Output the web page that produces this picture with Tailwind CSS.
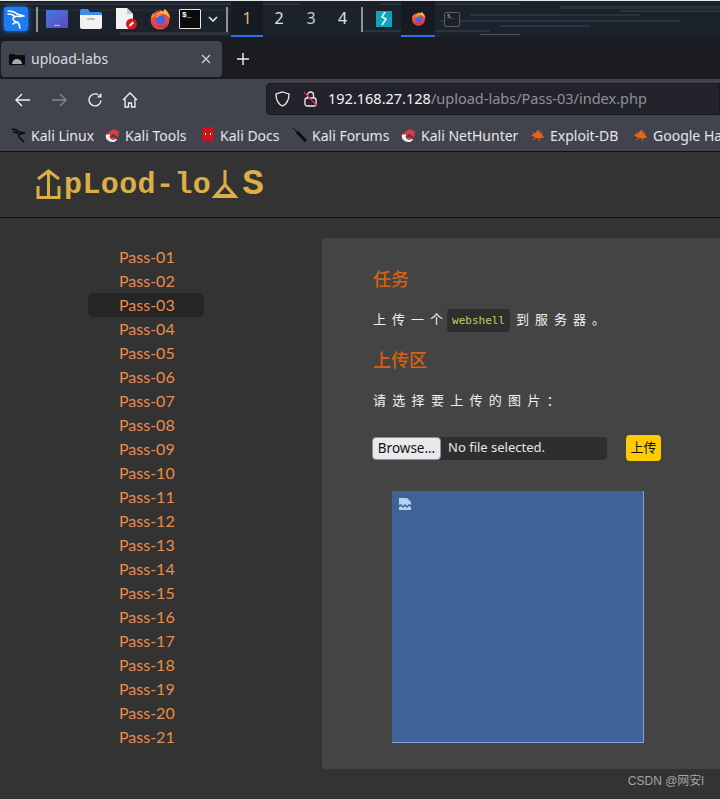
<!DOCTYPE html>
<html lang="zh">
<head>
  <meta charset="UTF-8">
  <title>upload-labs</title>
  <script src="https://cdn.jsdelivr.net/npm/@tailwindcss/browser@4"></script>
</head>
<body class="w-[720px] h-[799px] overflow-hidden bg-[#333333] font-['Noto_Sans','Noto_Sans_CJK_SC',sans-serif]">
  <svg class="hidden">
    <defs>
      <symbol id="firefox" viewBox="0 0 22 22">
        <circle cx="11" cy="12" r="9.5" fill="#f0483e"/>
        <path d="M3 5c1 2 2 2 3 3 2-3 5-3 6-6 1 1 1 2 2 2 1-1 1-3 1-3 4 2 6 6 6 10-1-2-2-3-4-4-3-2-6-1-8 0-2 0-5 0-6-2z" fill="#ffb53d"/>
        <path d="M2 10c0-2 1-3 2-4l1 3z" fill="#ff8a2b"/>
        <circle cx="11.500" cy="12" r="5" fill="#4a63d8"/>
        <path d="M6 9c2-2 6-3 9-1-3-1-6 0-7 2z" fill="#ff9a2e"/>
        <path d="M2 13c2 5 8 8 13 6 2-1 4-3 5-6-2 3-5 5-9 5-4 0-7-2-9-5z" fill="#e0283f"/>
      </symbol>
      <symbol id="kalitools" viewBox="0 0 16 16">
        <path d="M1 7 9 1l6 3-1 6-5-4-4 3z" fill="#e0393e"/>
        <path d="M1 7c-1 5 3 8 7 8 2 0 4-1 5-3l-4-2c-1 1-2 1-3 0l-1-3z" fill="#f2f2f2"/>
        <path d="M5 9l3 3 4-1" fill="none" stroke="#c9262b" stroke-width="1.500"/>
      </symbol>
      <symbol id="bug" viewBox="0 0 16 16">
        <path d="M1 8 6 5l2-3 2 2 3 3 2 3-4 1H7z" fill="#e8641b"/>
        <path d="M3 4l3 3M10 2l-1 4M13 5l-3 2M3 13l4-3M10 14l0-4" stroke="#e8641b" stroke-width="1"/>
      </symbol>
    </defs>
  </svg>

  <!-- panel -->
  <div class="relative h-[37px] bg-[#1b222c] border-t border-[#e6e6e6] overflow-hidden">
    <svg class="absolute inset-0" width="720" height="36" viewBox="0 0 720 36">
      <g fill="#2a323e">
        <rect x="0" y="2" width="300" height="2"/><rect x="380" y="2" width="140" height="2"/><rect x="560" y="5" width="160" height="3"/>
        <rect x="470" y="13" width="170" height="2"/><rect x="440" y="19" width="240" height="2"/><rect x="500" y="24" width="90" height="2"/>
        <rect x="360" y="29" width="130" height="2"/><rect x="480" y="33" width="40" height="1" fill="#4a4f5a"/><rect x="620" y="9" width="100" height="2"/>
        <rect x="120" y="31" width="110" height="3"/><rect x="30" y="8" width="200" height="2" fill="#232a35"/>
      </g>
    </svg>
    <div class="relative flex items-center h-[36px]">
      <div class="w-[24px] h-[24px] ml-[4px] rounded-[3px] bg-[#1f7cf0] shadow-[0_0_5px_#2a7fff] flex items-center justify-center">
        <svg width="22" height="22" viewBox="0 0 22 22" fill="none" stroke="#fff" stroke-width="1.600" stroke-linecap="round" stroke-linejoin="round"><path d="M3 3c4 0 7 1 9 3l7 2-5 .5c-3-.5-6 0-6 2.500s4 2.500 6 5l1 4M3 6c3 0 5 .5 6 2M13 14c-2 0-4 1-5 2"/></svg>
      </div>
      <div class="w-[2px] h-[25px] ml-[8px] bg-[#8f9296]"></div>
      <div class="w-[22px] h-[18px] ml-[8px] rounded-[1px] bg-gradient-to-br from-[#4178e0] to-[#5a4bbd] flex items-end justify-center text-white text-[7px] leading-[9px] font-bold">...</div>
      <svg class="ml-[12px]" width="22" height="20" viewBox="0 0 22 20"><path d="M0 2a2 2 0 0 1 2-2h6l2 3h10a2 2 0 0 1 2 2v4H0z" fill="#3d8bea"/><path d="M0 6h22v12a2 2 0 0 1-2 2H2a2 2 0 0 1-2-2z" fill="#f1f1ef"/><rect x="7" y="9" width="8" height="2" rx="1" fill="#b9b9b9"/></svg>
      <svg class="ml-[14px]" width="22" height="22" viewBox="0 0 22 22"><path d="M0 0h11l6 6v15H0z" fill="#f2f2f2"/><path d="M11 0l6 6h-6z" fill="#c9c9c9"/><circle cx="15.500" cy="16" r="5.500" fill="#d5171f"/><path d="M13 18.500l.5-2 3-3 1.500 1.500-3 3z" fill="#fff"/></svg>
      <svg class="ml-[11px]" width="22" height="22"><use href="#firefox"/></svg>
      <div class="w-[22px] h-[20px] ml-[8px] bg-[#0b0b0b] border border-[#e6e6e6] rounded-[1px] text-white text-[8px] leading-[10px] pl-[2px] font-['Liberation_Mono',monospace] font-bold">$_</div>
      <svg class="ml-[7px]" width="10" height="6" viewBox="0 0 10 6" fill="none" stroke="#e5e5e5" stroke-width="1.600"><path d="M1 1l4 4 4-4"/></svg>
      <div class="w-[2px] h-[25px] ml-[8px] bg-[#8f9296]"></div>
      <div class="ml-[3px] flex text-[16px] text-[#dfe3e8] text-center leading-[34px]">
        <div class="w-[32px] h-[36px] bg-[#161b23] border-b-2 border-[#2e6fe6] text-[#e0b48a]">1</div>
        <div class="w-[32px] h-[36px]">2</div>
        <div class="w-[32px] h-[36px] text-[#c4ccd6]">3</div>
        <div class="w-[31px] h-[36px]">4</div>
      </div>
      <div class="w-[2px] h-[25px] ml-[3px] bg-[#8f9296]"></div>
      <div class="w-[16px] h-[16px] ml-[13px] bg-[#0fa3ba] flex items-center justify-center">
        <svg width="10" height="14" viewBox="0 0 10 14" fill="none" stroke="#e8f7fa" stroke-width="1.600"><path d="M6 0 3 5l4 2-4 6"/></svg>
      </div>
      <div class="w-[34px] h-[36px] ml-[9px] bg-[#161b23] border-b-2 border-[#2e6fe6] flex items-center justify-center">
        <svg width="15" height="15"><use href="#firefox"/></svg>
      </div>
      <div class="w-[16px] h-[15px] ml-[9px] border border-[#5b5f66] rounded-[2px] bg-[#1c2027] text-[#a9adb3] text-[6px] leading-[8px] pl-[2px] font-['Liberation_Mono',monospace]">$_</div>
    </div>
  </div>

  <!-- tab strip -->
  <div class="h-[42px] bg-[#1b1c21] flex items-center pt-[1px]">
    <div class="ml-[1px] w-[221px] h-[36px] bg-[#42444d] rounded-[4px] flex items-center text-[#d5dce6]">
      <svg class="ml-[8px]" width="16" height="12" viewBox="0 0 16 12"><path d="M0 2a1 1 0 0 1 1-1h4l1 1h9a1 1 0 0 1 1 1v8a1 1 0 0 1-1 1H1a1 1 0 0 1-1-1z" fill="#0d0d0d"/><path d="M3 11a5 5 0 0 1 10 0z" fill="#a9a9a9"/></svg>
      <span class="ml-[6px] text-[14px]">upload-labs</span>
      <svg class="ml-auto mr-[11px]" width="10" height="10" viewBox="0 0 10 10" stroke="#cfd3da" stroke-width="1.200"><path d="M1 1l8 8M9 1l-8 8"/></svg>
    </div>
    <svg class="ml-[15px]" width="12" height="12" viewBox="0 0 12 12" stroke="#f0f0f0" stroke-width="1.400"><path d="M6 0v12M0 6h12"/></svg>
  </div>

  <!-- toolbar -->
  <div class="h-[42px] bg-[#42444d] flex items-center">
    <svg class="ml-[15px]" width="16" height="14" viewBox="0 0 16 14" fill="none" stroke="#f0f0f2" stroke-width="1.400"><path d="M15 7H1M7 1 1 7l6 6"/></svg>
    <svg class="ml-[20px]" width="16" height="14" viewBox="0 0 16 14" fill="none" stroke="#85868c" stroke-width="1.400"><path d="M1 7h14M9 1l6 6-6 6"/></svg>
    <svg class="ml-[20px]" width="16" height="16" viewBox="0 0 16 16" fill="none" stroke="#f0f0f2" stroke-width="1.400"><path d="M14 8.500A6 6 0 1 1 11.500 3"/><path d="M14.500 1v4.500H10z" fill="#f0f0f2" stroke="none"/></svg>
    <svg class="ml-[19px]" width="16" height="16" viewBox="0 0 16 16" fill="none" stroke="#f0f0f2" stroke-width="1.300"><path d="M1 8 8 1l7 7M3 6.500V15h3.500v-4h3v4H13V6.500"/></svg>
    <div class="ml-[128px] flex-1 h-[32px] -mt-[3px] bg-[#23232c] border border-[#17171c] rounded-l-[4px] flex items-center">
      <svg class="ml-[8px] shrink-0" width="15" height="16" viewBox="0 0 15 16" fill="none" stroke="#f0f0f2" stroke-width="1.300"><path d="M7.500 1 14 3c0 6-2 10-6.500 12C3 13 1 9 1 3z"/></svg>
      <svg class="ml-[13px] shrink-0" width="15" height="16" viewBox="0 0 15 16" fill="none" stroke="#f0f0f2" stroke-width="1.300"><rect x="2" y="7" width="11" height="8" rx="2"/><path d="M4.500 7V4a3 3 0 0 1 6 0v3"/><path d="M1 1l13 14" stroke="#e0294a"/></svg>
      <span class="ml-[10px] text-[14.500px] text-[#f4f4f5]">192.168.27.128<span class="text-[#8f9096]">/upload-labs/Pass-03/index.php</span></span>
    </div>
  </div>

  <!-- bookmarks -->
  <div class="h-[30px] bg-[#42444d] flex items-center text-[14px] text-[#e4e6ea] whitespace-nowrap overflow-hidden pb-[2px]">
    <div class="w-[94px] ml-[11px] shrink-0 flex items-center gap-[4px]">
      <svg class="shrink-0" width="16" height="16" viewBox="0 0 16 16" fill="none" stroke="#0c0c0c" stroke-width="1.500"><path d="M1 2c3 0 5 1 7 3l6 1-4 1c-2 0-3 1-2 3l5 5M2 5c2 0 4 0 5 2"/></svg>
      <span>Kali Linux</span>
    </div>
    <div class="w-[97px] shrink-0 flex items-center gap-[5px]">
      <svg class="shrink-0" width="15" height="15"><use href="#kalitools"/></svg>
      <span>Kali Tools</span>
    </div>
    <div class="w-[90px] shrink-0 flex items-center gap-[6px]">
      <svg class="shrink-0" width="12" height="16" viewBox="0 0 12 16"><path d="M0 1a1 1 0 0 1 1-1h11v14H2v2H1a1 1 0 0 1-1-1z" fill="#c4161c"/><path d="M0 14h2v2H0z" fill="#2a4d9a"/><path d="M4 6 3 7l1 1M8 6l1 1-1 1" stroke="#fff" fill="none"/></svg>
      <span>Kali Docs</span>
    </div>
    <div class="w-[109px] shrink-0 flex items-center gap-[5px]">
      <svg class="shrink-0" width="15" height="16" viewBox="0 0 15 16" fill="none" stroke="#0b0b0b"><path d="M1 1l5 5" stroke-width="1"/><path d="M5 5l9 9" stroke-width="3"/></svg>
      <span>Kali Forums</span>
    </div>
    <div class="w-[129px] shrink-0 flex items-center gap-[5px]">
      <svg class="shrink-0" width="15" height="15"><use href="#kalitools"/></svg>
      <span>Kali NetHunter</span>
    </div>
    <div class="w-[103px] shrink-0 flex items-center gap-[5px]">
      <svg class="shrink-0" width="15" height="15"><use href="#bug"/></svg>
      <span>Exploit-DB</span>
    </div>
    <div class="w-[87px] shrink-0 flex items-center gap-[5px]">
      <svg class="shrink-0" width="15" height="15"><use href="#bug"/></svg>
      <span>Google Ha</span>
    </div>
  </div>

  <!-- site header -->
  <header class="h-[67px] bg-[#333333] border-y border-[#0e0e0e] flex items-center pl-[36px] text-[#dcae46]" aria-label="upload-labs">
    <svg width="25" height="30" viewBox="0 0 25 30" fill="none" stroke="#dcae46" stroke-width="3" class="-mt-[2px]"><path d="M2 10 12.500 2 23 10M12.500 2v26M2 17v11.500h21V17"/></svg>
    <span class="ml-[3px] font-['Liberation_Mono',monospace] font-bold text-[30px] leading-none tracking-[0.400px]">pLood-lo</span>
    <svg width="28" height="30" viewBox="0 0 28 30" class="-mt-[2px]"><path d="M12.500 1h3v14l12 14H.5l12-14z" fill="#dcae46"/><path d="M14 18l-6 7h12z" fill="#333333"/></svg>
    <span class="ml-[3px] font-['Liberation_Mono',monospace] font-bold text-[36px] leading-none">S</span>
  </header>

  <div class="flex pt-[20px]">
    <!-- sidebar -->
    <nav class="w-[322px] shrink-0 pl-[88px] pt-[7px] font-['Lato',sans-serif] text-[16px] leading-[24px] text-[#e98d4e]">
      <div class="pl-[31px] w-[116px]">Pass-01</div>
      <div class="pl-[31px] w-[116px]">Pass-02</div>
      <div class="pl-[31px] w-[116px] bg-[#252525] rounded-[5px]">Pass-03</div>
      <div class="pl-[31px] w-[116px]">Pass-04</div>
      <div class="pl-[31px] w-[116px]">Pass-05</div>
      <div class="pl-[31px] w-[116px]">Pass-06</div>
      <div class="pl-[31px] w-[116px]">Pass-07</div>
      <div class="pl-[31px] w-[116px]">Pass-08</div>
      <div class="pl-[31px] w-[116px]">Pass-09</div>
      <div class="pl-[31px] w-[116px]">Pass-10</div>
      <div class="pl-[31px] w-[116px]">Pass-11</div>
      <div class="pl-[31px] w-[116px]">Pass-12</div>
      <div class="pl-[31px] w-[116px]">Pass-13</div>
      <div class="pl-[31px] w-[116px]">Pass-14</div>
      <div class="pl-[31px] w-[116px]">Pass-15</div>
      <div class="pl-[31px] w-[116px]">Pass-16</div>
      <div class="pl-[31px] w-[116px]">Pass-17</div>
      <div class="pl-[31px] w-[116px]">Pass-18</div>
      <div class="pl-[31px] w-[116px]">Pass-19</div>
      <div class="pl-[31px] w-[116px]">Pass-20</div>
      <div class="pl-[31px] w-[116px]">Pass-21</div>
    </nav>

    <!-- content -->
    <main class="flex-1 h-[531px] bg-[#444444] rounded-l-[4px] pl-[51px] pt-[28px] text-[#f0f0f0]">
      <h2 class="text-[18px] leading-[26px] font-medium text-[#d9600f]">任务</h2>
      <p class="mt-[16px] h-[24px] flex items-center text-[13px] tracking-[6px]">上传一个<code class="-ml-[2px] mr-[6px] px-[5px] h-[23px] leading-[23px] rounded-[4px] bg-[#2e2e2e] text-[#bcd45e] text-[11px] tracking-normal font-['DejaVu_Sans_Mono',monospace]">webshell</code>到服务器。</p>
      <h2 class="mt-[15px] text-[18px] leading-[26px] font-medium text-[#d9600f]">上传区</h2>
      <p class="mt-[17px] h-[20px] leading-[20px] text-[13px] tracking-[6.300px]">请选择要上传的图片：</p>
      <form class="mt-[25px] -ml-[1px] flex items-center h-[26px]">
        <div class="w-[235px] h-[23px] bg-[#2e2e2e] rounded-[4px] flex items-center text-[#e6e6e6]">
          <span class="w-[69px] h-[23px] bg-[#e9e9ed] border border-[#8f8f9d] rounded-[4px] text-[13.500px] text-[#111] text-center leading-[21px]">Browse…</span>
          <span class="ml-[7px] text-[13px]">No file selected.</span>
        </div>
        <button type="button" class="ml-[19px] w-[35px] h-[26px] bg-[#ffcc00] rounded-[4px] text-[13px] text-[#111]">上传</button>
      </form>
      <div class="mt-[30px] ml-[19px] w-[252px] h-[252px] bg-[#3f6396] border-r border-b border-[#7fa3d6] p-[6px]">
        <svg width="14" height="14" viewBox="0 0 14 14"><path d="M1 1h8l4 4v3l-2-1-2 2-2-2-2 2-2-2-2 1z" fill="#b5d0f5"/><path d="M1 10l2-1 2 2 2-2 2 2 2-2 2 1v3H1z" fill="#b5d0f5"/></svg>
      </div>
    </main>
  </div>

  <div class="absolute right-[16px] bottom-[9px] text-[12px] text-[#a5a5a5] font-['Liberation_Sans','Noto_Sans_CJK_SC',sans-serif]">CSDN @网安l</div>
</body>
</html>
